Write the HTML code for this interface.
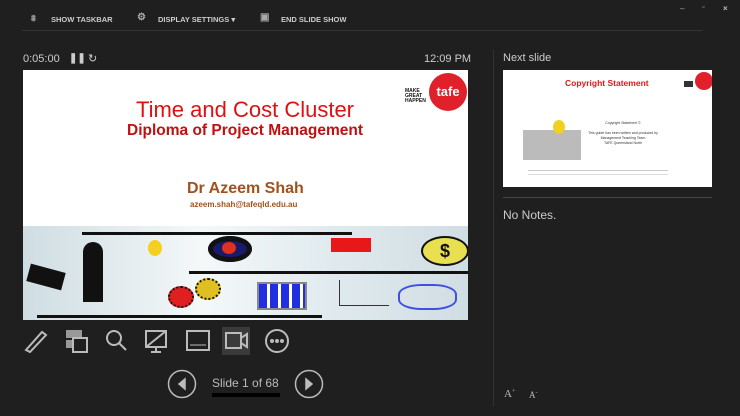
<!DOCTYPE html>
<html><head><style>
body{margin:0;width:740px;height:416px;background:#1f1f1f;font-family:"Liberation Sans",sans-serif;color:#ddd;position:relative;overflow:hidden}
.a{position:absolute}
.tb{font-size:7.5px;font-weight:bold;color:#ccc;top:15px}
</style></head><body>
<div class="a tb" style="left:31px;top:13px;font-size:9px;color:#999">⩩</div>
<div class="a tb" style="left:51px">SHOW TASKBAR</div>
<div class="a tb" style="left:137px;top:12px;font-size:10px;color:#aaa">⚙</div>
<div class="a tb" style="left:158px">DISPLAY SETTINGS ▾</div>
<div class="a tb" style="left:260px;top:12px;font-size:10px;color:#aaa">▣</div>
<div class="a tb" style="left:281px">END SLIDE SHOW</div>
<div class="a" style="left:680px;top:4px;font-size:8px;color:#aaa">–</div>
<div class="a" style="left:702px;top:4px;font-size:7px;color:#aaa">▫</div>
<div class="a" style="left:723px;top:4px;font-size:8px;color:#bbb;font-weight:bold">×</div>
<div class="a" style="left:22px;top:30px;width:681px;height:1px;background:#333"></div>
<div class="a" style="left:23px;top:53px;font-size:11px;color:#ccc">0:05:00</div>
<div class="a" style="left:69px;top:53px;font-size:10px;color:#ccc;font-weight:bold">❚❚</div>
<div class="a" style="left:88px;top:52px;font-size:11px;color:#ccc">↻</div>
<div class="a" style="left:424px;top:53px;font-size:11px;color:#ccc">12:09 PM</div>
<div class="a" style="left:493px;top:50px;width:1px;height:356px;background:#333"></div>
<div class="a" style="left:503px;top:52px;font-size:11px;color:#ccc">Next slide</div>
<!-- main slide -->
<div class="a" style="left:23px;top:70px;width:445px;height:250px;background:#fff;overflow:hidden">
 <div class="a" style="left:0;top:27px;width:444px;text-align:center;color:#e01010;font-size:22px">Time and Cost Cluster</div>
 <div class="a" style="left:0;top:52px;width:444px;text-align:center;color:#c01010;font-size:15.5px;font-weight:bold">Diploma of Project Management</div>
 <div class="a" style="left:164px;top:110px;color:#a0521e;font-size:16px;font-weight:bold">Dr Azeem Shah</div>
 <div class="a" style="left:167px;top:130px;color:#a0521e;font-size:8px;font-weight:bold">azeem.shah@tafeqld.edu.au</div>
 <div class="a" style="left:382px;top:19px;font-size:5px;font-weight:bold;color:#111;line-height:5px">MAKE<br>GREAT<br>HAPPEN</div>
 <div class="a" style="left:406px;top:3px;width:38px;height:38px;border-radius:50%;background:#e0202a;color:#fff;font-weight:bold;font-size:13px;text-align:center;line-height:38px">tafe</div>
 <div class="a" style="left:0;top:156px;width:445px;height:94px;background:linear-gradient(90deg,#cfdde2,#f4f8f9 40%,#e0eaee 70%,#d0dde3)">
  <div class="a" style="left:59px;top:6px;width:270px;height:3px;background:#111"></div>
  <div class="a" style="left:166px;top:45px;width:280px;height:3px;background:#111"></div>
  <div class="a" style="left:14px;top:89px;width:285px;height:3px;background:#111"></div>
  <div class="a" style="left:60px;top:16px;width:20px;height:60px;background:#111;border-radius:10px 10px 0 0"></div>
  <div class="a" style="left:5px;top:42px;width:36px;height:18px;background:#111;transform:rotate(15deg)"></div>
  <div class="a" style="left:125px;top:14px;width:14px;height:16px;background:#f5d020;border-radius:50%"></div>
  <div class="a" style="left:185px;top:10px;width:44px;height:26px;background:#1a1a6a;border-radius:50%;box-shadow:inset 0 0 0 5px #111"></div>
  <div class="a" style="left:199px;top:16px;width:14px;height:12px;background:#e03020;border-radius:50%"></div>
  <div class="a" style="left:308px;top:12px;width:40px;height:14px;background:#e81818"></div>
  <div class="a" style="left:398px;top:10px;width:44px;height:26px;background:#e8e050;border:2px solid #111;border-radius:50%;text-align:center;font-weight:bold;font-size:18px;line-height:26px;color:#111">$</div>
  <div class="a" style="left:145px;top:60px;width:22px;height:18px;background:#e02020;border-radius:50%;border:2px dotted #111"></div>
  <div class="a" style="left:172px;top:52px;width:22px;height:18px;background:#e0c020;border-radius:50%;border:2px dotted #111"></div>
  <div class="a" style="left:234px;top:56px;width:46px;height:24px;background:#fff;border:2px solid #888;background-image:repeating-linear-gradient(90deg,#2030e0 0 8px,transparent 8px 11px)"></div>
  <div class="a" style="left:316px;top:54px;width:1px;height:25px;background:#333"></div>
  <div class="a" style="left:316px;top:79px;width:50px;height:1px;background:#333"></div>
  <div class="a" style="left:375px;top:58px;width:55px;height:22px;border:2px solid #4050e0;border-radius:40%"></div>
 </div>
</div>
<!-- next slide -->
<div class="a" style="left:503px;top:70px;width:209px;height:117px;background:#fff;overflow:hidden">
 <div class="a" style="left:62px;top:8px;color:#e01818;font-size:8.5px;font-weight:bold">Copyright Statement</div>
 <div class="a" style="left:192px;top:2px;width:18px;height:18px;border-radius:50%;background:#e0202a"></div>
 <div class="a" style="left:181px;top:11px;width:9px;height:6px;background:#333"></div>
 <div class="a" style="left:20px;top:30px;width:58px;height:60px;background:linear-gradient(#fff 50%,#bbb 50%)"></div>
 <div class="a" style="left:50px;top:50px;width:12px;height:14px;background:#f0d020;border-radius:50%"></div>
 <div class="a" style="left:80px;top:51px;width:80px;text-align:center;font-size:3.5px;color:#333;line-height:5px">Copyright Statement ©<br><br>This guide has been written and produced by<br>Management Teaching Team<br>TAFE Queensland North</div>
 <div class="a" style="left:25px;top:100px;width:140px;height:1px;background:#ccc"></div>
 <div class="a" style="left:25px;top:104px;width:140px;height:1px;background:#ddd"></div>
</div>
<div class="a" style="left:503px;top:197px;width:209px;height:1px;background:#444"></div>
<div class="a" style="left:503px;top:208px;font-size:12px;color:#ccc">No Notes.</div>
<!-- bottom toolbar -->
<svg class="a" style="left:22px;top:326px" width="280" height="30" viewBox="0 0 280 30" fill="none" stroke="#bbb" stroke-width="2">
 <path d="M4 24 L20 6 L24 9 L8 26 Z"/>
 <rect x="44" y="4" width="8" height="8" fill="#999" stroke="none"/><rect x="44" y="14" width="8" height="8" fill="#999" stroke="none"/><rect x="52" y="4" width="8" height="8" fill="#999" stroke="none"/><rect x="51" y="12" width="14" height="14"/>
 <circle cx="92" cy="12" r="7"/><path d="M97 17 L104 24"/>
 <path d="M124 5 H144 V21 H124 Z M124 21 L144 5 M134 21 V26 M129 26 H139"/>
 <rect x="165" y="5" width="22" height="19"/><path d="M168 19 H184" stroke-width="1"/>
 <rect x="200" y="1" width="28" height="28" fill="#3a3a3a" stroke="none"/><rect x="204" y="7" width="15" height="15"/><path d="M219 12 L225 8 V21 L219 17"/>
 <circle cx="255" cy="15" r="11"/><circle cx="250" cy="15" r="1" fill="#bbb"/><circle cx="255" cy="15" r="1" fill="#bbb"/><circle cx="260" cy="15" r="1" fill="#bbb"/>
</svg>
<svg class="a" style="left:166px;top:368px" width="160" height="32" fill="none" stroke="#bbb" stroke-width="1.5">
 <circle cx="16" cy="16" r="13.5"/><path d="M19 11 L13 16 L19 21 Z" fill="#bbb"/>
 <circle cx="143" cy="16" r="13.5"/><path d="M140 11 L146 16 L140 21 Z" fill="#bbb"/>
</svg>
<div class="a" style="left:212px;top:376px;font-size:12px;color:#bbb">Slide 1 of 68</div>
<div class="a" style="left:212px;top:393px;width:68px;height:4px;background:#000"></div>
<div class="a" style="left:504px;top:388px;font-size:11px;color:#bbb;font-family:'Liberation Serif',serif">A<sup style="font-size:6px">+</sup></div>
<div class="a" style="left:529px;top:390px;font-size:9px;color:#bbb;font-family:'Liberation Serif',serif">A<sup style="font-size:6px">-</sup></div>
</body></html>
